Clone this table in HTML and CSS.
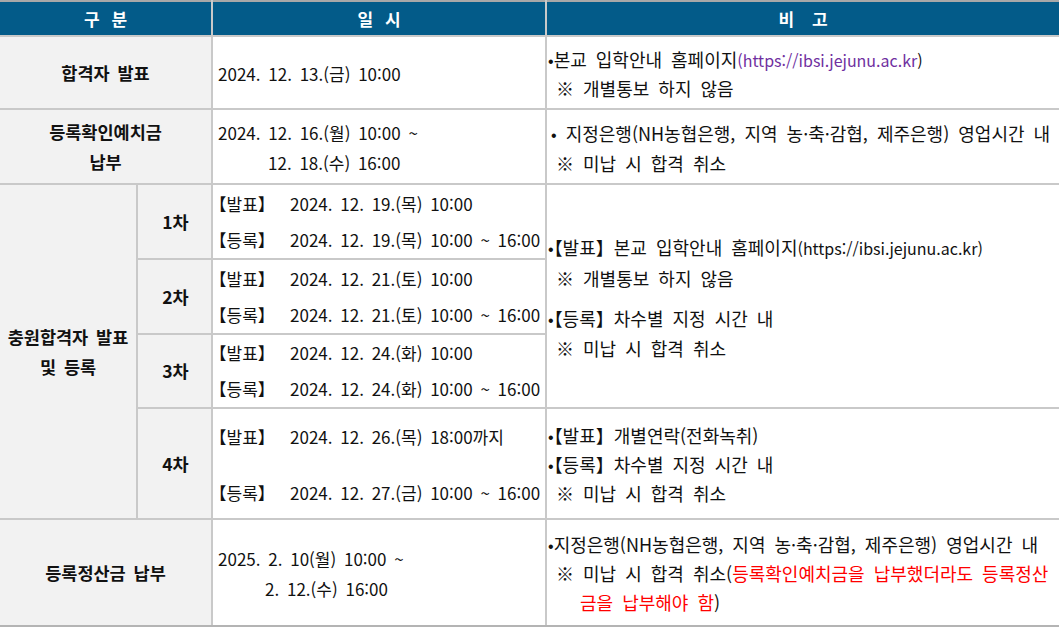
FILE: index.html
```html
<!DOCTYPE html>
<html lang="ko">
<head>
<meta charset="utf-8">
<title>합격자 발표 및 등록 일정</title>
<link rel="stylesheet" href="styles.css">
</head>
<body>
<table class="sched">
  <colgroup>
    <col class="w-a"><col class="w-b"><col class="w-c"><col class="w-d">
  </colgroup>
  <thead>
    <tr class="h-head">
      <th colspan="2" class="hd">구 분</th>
      <th class="hd">일 시</th>
      <th class="hd wide">비 고</th>
    </tr>
  </thead>
  <tbody>
    <tr class="h-r1">
      <th colspan="2" class="lbl">합격자 발표</th>
      <td class="date pt2"><span class="ln">2024. 12. 13.(금) 10:00</span></td>
      <td class="note lh28">
        <span class="ln"><span class="bul">•</span>본교 입학안내 홈페이지<span class="link lat">(https://ibsi.jejunu.ac.kr</span><span class="lat">)</span></span>
        <span class="ln ind">※ 개별통보 하지 않음</span>
      </td>
    </tr>
    <tr class="h-r2">
      <th colspan="2" class="lbl">등록확인예치금<br>납부</th>
      <td class="date pt2 lh30">
        <span class="ln">2024. 12. 16.(월) 10:00 ~</span>
        <span class="ln cont">12. 18.(수) 16:00</span>
      </td>
      <td class="note lh30">
        <span class="ln pad3"><span class="bul">•</span> 지정은행(NH농협은행, 지역 농·축·감협, 제주은행) 영업시간 내</span>
        <span class="ln ind">※ 미납 시 합격 취소</span>
      </td>
    </tr>
    <tr class="h-r3">
      <th rowspan="4" class="lbl">충원합격자 발표<br>및 등록</th>
      <th class="lbl sub">1차</th>
      <td class="date lh36">
        <span class="ln"><span class="tag bk">【발표】</span>2024. 12. 19.(목) 10:00</span>
        <span class="ln"><span class="tag bk">【등록】</span>2024. 12. 19.(목) 10:00 ~ 16:00</span>
      </td>
      <td rowspan="3" class="note lh30">
        <span class="ln"><span class="bul">•</span><span class="bk">【발표】</span> 본교 입학안내 홈페이지<span class="lat">(https://ibsi.jejunu.ac.kr)</span></span>
        <span class="ln ind">※ 개별통보 하지 않음</span>
        <span class="ln grp"><span class="bul">•</span><span class="bk">【등록】</span> 차수별 지정 시간 내</span>
        <span class="ln ind">※ 미납 시 합격 취소</span>
      </td>
    </tr>
    <tr class="h-r4">
      <th class="lbl sub">2차</th>
      <td class="date lh36">
        <span class="ln"><span class="tag bk">【발표】</span>2024. 12. 21.(토) 10:00</span>
        <span class="ln"><span class="tag bk">【등록】</span>2024. 12. 21.(토) 10:00 ~ 16:00</span>
      </td>
    </tr>
    <tr class="h-r5">
      <th class="lbl sub">3차</th>
      <td class="date lh36">
        <span class="ln"><span class="tag bk">【발표】</span>2024. 12. 24.(화) 10:00</span>
        <span class="ln"><span class="tag bk">【등록】</span>2024. 12. 24.(화) 10:00 ~ 16:00</span>
      </td>
    </tr>
    <tr class="h-r6">
      <th class="lbl sub">4차</th>
      <td class="date pt2 lh28">
        <span class="ln"><span class="tag bk">【발표】</span>2024. 12. 26.(목) 18:00까지</span>
        <span class="ln skip"><span class="tag bk">【등록】</span>2024. 12. 27.(금) 10:00 ~ 16:00</span>
      </td>
      <td class="note lh29">
        <span class="ln"><span class="bul">•</span><span class="bk">【발표】</span> 개별연락(전화녹취)</span>
        <span class="ln"><span class="bul">•</span><span class="bk">【등록】</span> 차수별 지정 시간 내</span>
        <span class="ln ind">※ 미납 시 합격 취소</span>
      </td>
    </tr>
    <tr class="h-r7">
      <th colspan="2" class="lbl">등록정산금 납부</th>
      <td class="date pt2 lh30">
        <span class="ln">2025. 2. 10(월) 10:00 ~</span>
        <span class="ln cont2">2. 12.(수) 16:00</span>
      </td>
      <td class="note lh29">
        <span class="ln"><span class="bul">•</span>지정은행(NH농협은행, 지역 농·축·감협, 제주은행) 영업시간 내</span>
        <span class="ln ind">※ 미납 시 합격 취소(<span class="red">등록확인예치금을 납부했더라도 등록정산</span></span>
        <span class="ln ind2"><span class="red">금을 납부해야 함</span>)</span>
      </td>
    </tr>
  </tbody>
</table>
</body>
</html>
```

FILE: styles.css
```css
html, body {
  margin: 0;
  padding: 0;
  background: #ffffff;
}

body {
  font-family: "Noto Sans CJK KR", "Noto Sans", sans-serif;
  font-size: 17px;
  color: #111111;
  word-spacing: 3px;
}

.sched {
  width: 1059px;
  border-collapse: collapse;
  table-layout: fixed;
}

.w-a { width: 137px; }
.w-b { width: 75px; }
.w-c { width: 334px; }
.w-d { width: 513px; }

.sched th,
.sched td {
  border: 2px solid #c9c9c9;
  padding: 0;
  vertical-align: middle;
}

.sched tr > :first-child { border-left: none; }
.sched tr > :last-child { border-right: none; }
.sched tbody tr:last-child > * { border-bottom: 2px solid #b4b4b4; }

.sched .hd {
  background: #035b89;
  color: #ffffff;
  font-weight: bold;
  font-size: 17px;
  line-height: 20px;
  text-align: center;
  word-spacing: 7px;
  border-top: 2px solid #a8a8a8;
}
.sched .hd.wide { word-spacing: 13px; }

.h-head { height: 35px; }
.h-r1 { height: 73px; }
.h-r2 { height: 75px; }
.h-r3 { height: 75px; }
.h-r4 { height: 75px; }
.h-r5 { height: 74px; }
.h-r6 { height: 111px; }
.h-r7 { height: 107px; }

.sched .lbl {
  background: #f2f2f2;
  font-weight: bold;
  font-size: 17.5px;
  line-height: 30px;
  text-align: center;
  color: #111111;
}
.sched .lbl.sub { padding-left: 2px; }

.ln {
  display: block;
  white-space: nowrap;
}

.sched .date {
  padding-left: 5px;
  font-size: 17px;
}
.sched .date.pt2 { padding-top: 2px; }

.sched .note {
  padding-left: 1px;
  padding-top: 2px;
  font-size: 18px;
  word-spacing: 4px;
}

.lh28 { line-height: 28px; }
.lh29 { line-height: 29px; }
.lh30 { line-height: 30px; }
.lh36 { line-height: 36px; }

.cont { padding-left: 50px; }
.cont2 { padding-left: 47px; }
.ind { padding-left: 8px; }
.ind2 { padding-left: 32px; }
.pad3 { padding-left: 3px; }
.grp { margin-top: 10px; }
.skip { margin-top: 28px; }

.tag {
  display: inline-block;
  width: 72px;
  word-spacing: 0;
}

.bk {
  font-feature-settings: "halt" 1;
}

.bul {
  font-family: "Liberation Sans", sans-serif;
  font-size: 16px;
  line-height: 0;
}

.lat {
  font-size: 16px;
  word-spacing: 0;
}

.link { color: #7030a0; }
.red { color: #ff0000; }
```
